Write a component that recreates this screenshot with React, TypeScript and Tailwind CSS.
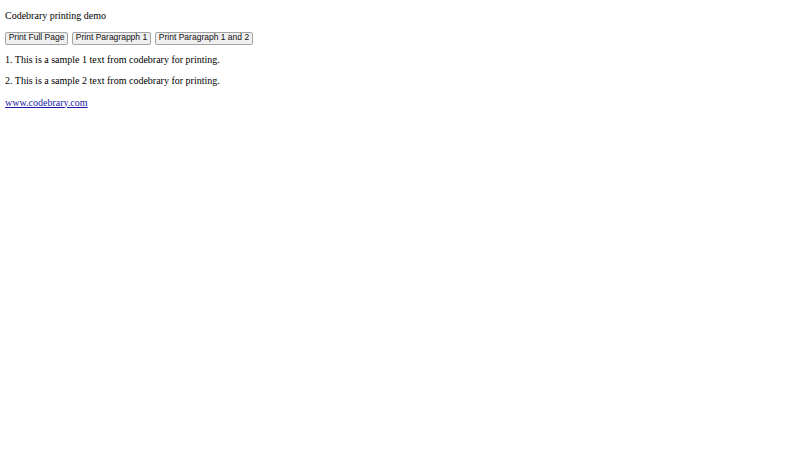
export default function App() {
    const buttons = [
        { label: 'Print Full Page', w: 'w-[63px]' },
        { label: 'Print Paragrapph 1', w: 'w-[79px]' },
        { label: 'Print Paragraph 1 and 2', w: 'w-[98px]' },
    ];

    return (
        <div className="min-h-screen bg-white px-[5px] pt-[10px] text-black text-[10px] leading-[11.5px] font-['Liberation_Serif',serif]">
            <p>Codebrary printing demo</p>
            <div className="mt-[10px] flex gap-[4px]">
                {buttons.map(b => (
                    <button
                        key={b.label}
                        className={`${b.w} h-[13px] flex items-center justify-center whitespace-nowrap rounded-[2px] border border-[#a3a3a3] bg-[#efefef] text-[8.5px] font-['Liberation_Sans',sans-serif] text-[#111]`}
                    >
                        {b.label}
                    </button>
                ))}
            </div>
            <p className="mt-[9px]">1. This is a sample 1 text from codebrary for printing.</p>
            <p className="mt-[10px]">2. This is a sample 2 text from codebrary for printing.</p>
            <p className="mt-[10px]">
                <a href="#" className="underline text-[#1a1aa6]">www.codebrary.com</a>
            </p>
        </div>
    );
}
